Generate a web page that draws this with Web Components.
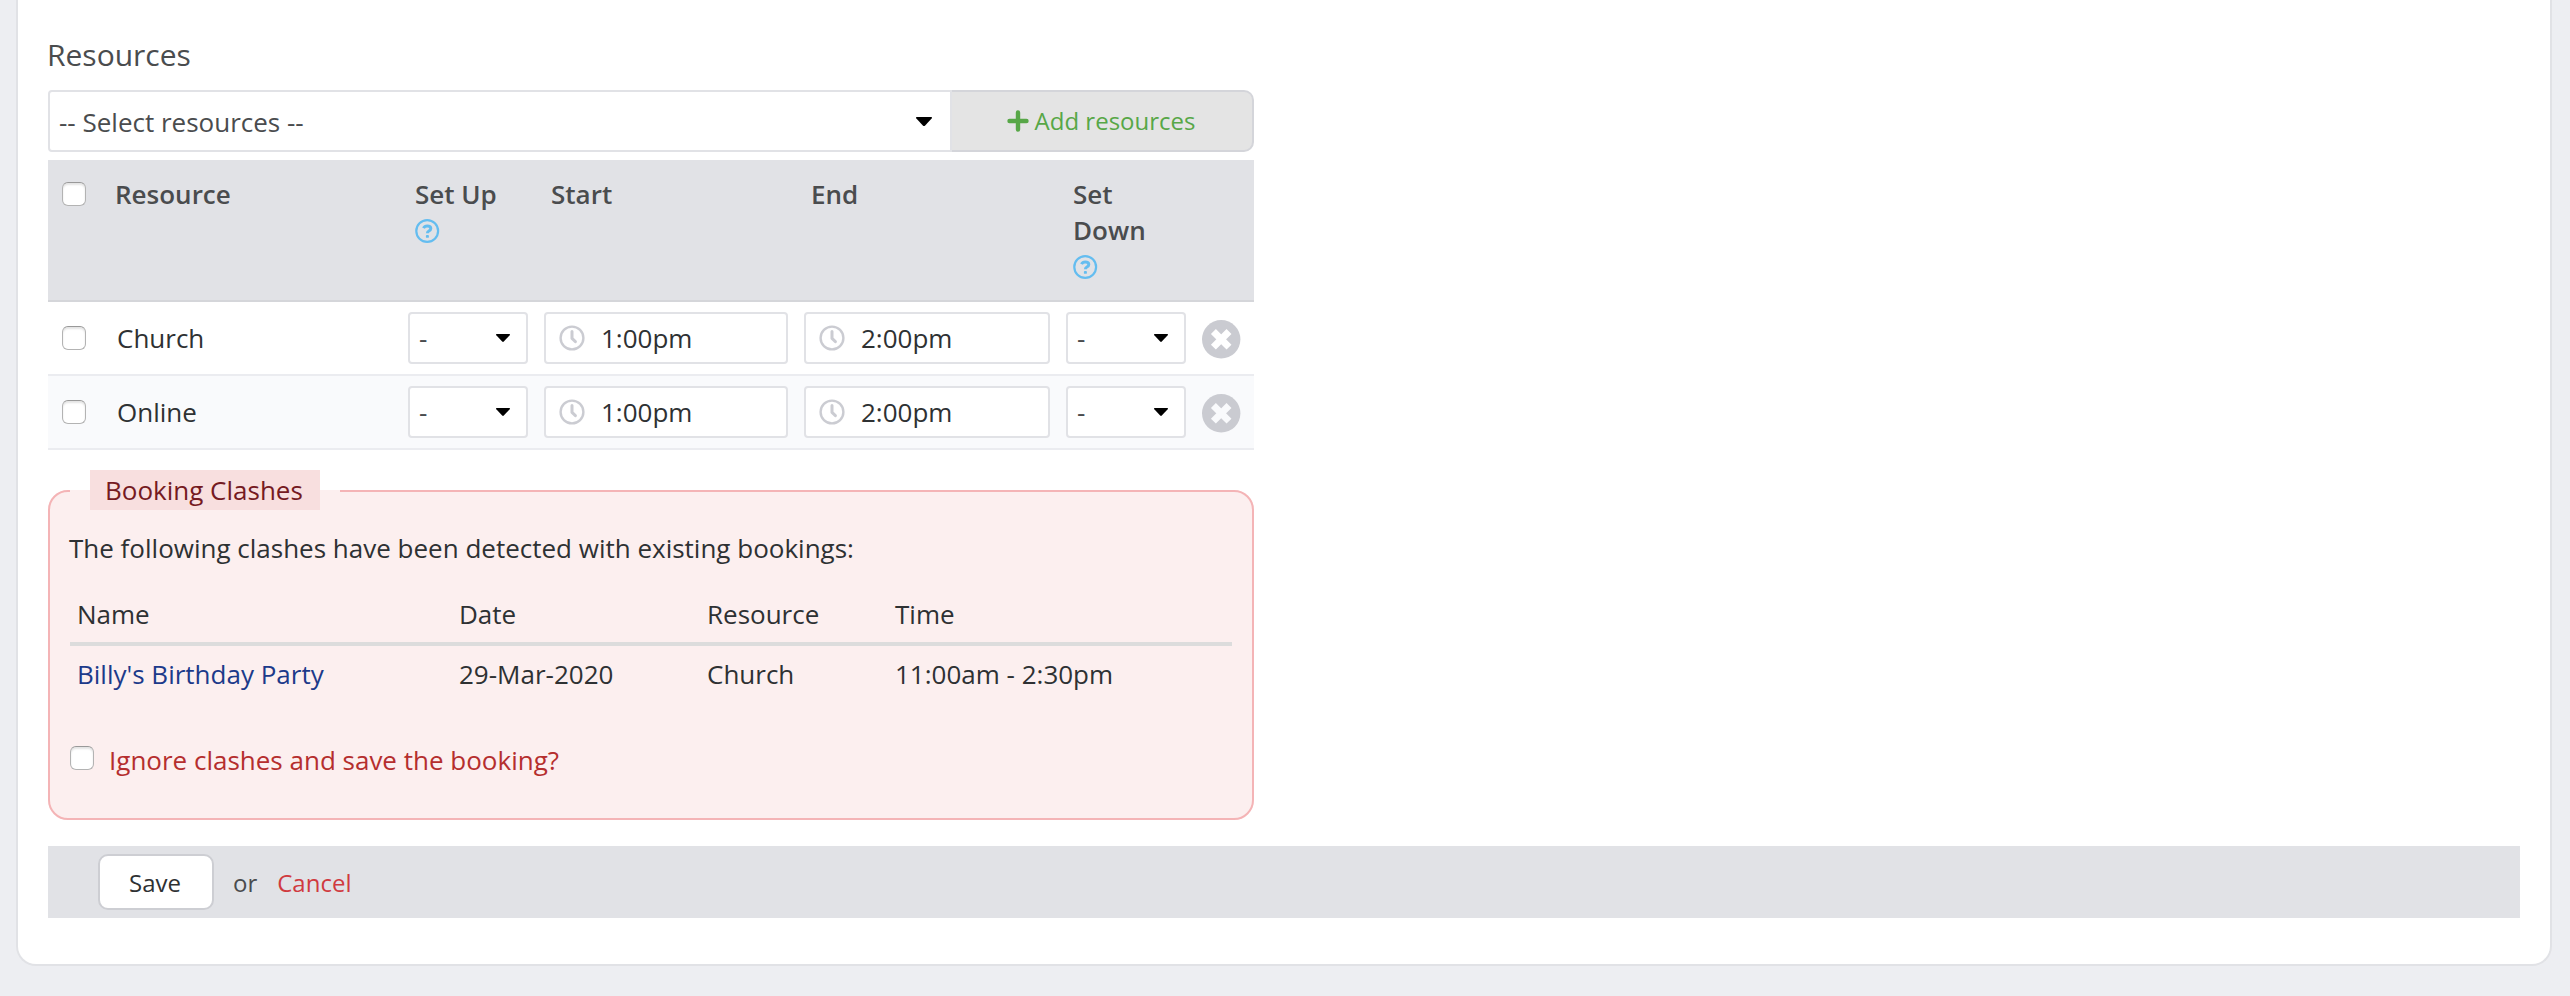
<!DOCTYPE html>
<html lang="en">
<head>
<meta charset="utf-8">
<title>Booking resources</title>
<style>
html, body { margin: 0; height: 100%; }
body { background: #edeef2; font: 26px/36px "Open Sans", sans-serif; color: #2e3133; overflow: hidden; }
</style>
</head>
<body>
<booking-page></booking-page>
<script>
const define = (name, html) => {
  const template = document.createElement('template');
  template.innerHTML = html;
  customElements.define(name, class extends HTMLElement {
    constructor() {
      super();
      this.attachShadow({ mode: 'open' }).append(template.content.cloneNode(true));
    }
  });
};

define('check-box', `<style>
:host { display: block; width: 24px; height: 24px; box-sizing: border-box; border: 1.5px solid #b3b3b3; border-top-color: #999; border-radius: 6px; background: #fff; box-shadow: inset 0 2px 2px #e4e4e4; flex: none; }
</style>`);

define('help-icon', `<style>
:host { display: flex; align-items: center; height: 36px; padding: 2px 0 0; box-sizing: border-box; }
svg { display: block; }
</style>
<svg width="25" height="24" viewBox="0 0 25 24" fill="none" stroke="#64bdf0">
<circle cx="12.2" cy="12" r="10.9" stroke-width="2.2"/>
<path d="M8.5 9.2Q9.6 6.9 12.2 6.9Q15.8 6.9 15.8 9.6Q15.8 11 13.9 12Q12.4 12.8 12.4 14.3" stroke-width="3"/>
<rect x="10.9" y="16" width="3" height="2.8" rx=".9" fill="#64bdf0" stroke="none"/>
</svg>`);

define('select-field', `<style>
:host { display: flex; align-items: center; justify-content: space-between; box-sizing: border-box; height: 52px; padding: 0 16px 0 9px; border: 2px solid #e1e2e6; border-radius: 4px; background: #fff; color: #4a4c4e; }
svg { display: block; width: var(--arrow, 14px); height: auto; }
</style>
<slot></slot><svg viewBox="0 0 14 8"><path d="M.6 0H13.4Q14.4 .5 13.7 1.3L7.8 7.6Q7 8.2 6.2 7.6L.3 1.3Q-.4 .5 .6 0Z"/></svg>`);

define('time-field', `<style>
:host { display: flex; align-items: center; box-sizing: border-box; height: 52px; padding-left: 13px; gap: 16px; border: 2px solid #e1e2e6; border-radius: 4px; background: #fff; }
svg { display: block; }
</style>
<svg width="26" height="26" viewBox="0 0 26 26" fill="none" stroke="#cbccd2"><circle cx="13" cy="13" r="11.4" stroke-width="2.4"/><path d="M13 6.6V13.4L16.4 16.6" stroke-width="3" stroke-linecap="round" stroke-linejoin="round"/></svg><slot></slot>`);

define('remove-button', `<style>
:host { display: block; width: 39px; height: 39px; margin-top: 2px; }
svg { display: block; }
</style>
<svg width="39" height="39" viewBox="0 0 39 39"><circle cx="19.2" cy="19.3" r="19.2" fill="#cacbd1"/><path d="M11.4 11.5L27 27.1M27 11.5L11.4 27.1" stroke="var(--row-bg, #fff)" stroke-width="7"/></svg>`);

define('resource-picker', `<style>
:host { display: flex; height: 62px; }
select-field { --arrow: 16px; width: 904px; height: 62px; padding: 1px 18px 0 9px; border-radius: 4px 0 0 4px; }
button { flex: 1; display: flex; align-items: center; justify-content: center; gap: 6px; margin: 0; padding: 0 2px 0 0; border: 2px solid #d4d5da; border-left: 0; border-radius: 0 10px 10px 0; background: #e4e4e4; color: #57a747; font: 24px/34px "Open Sans", sans-serif; }
</style>
<select-field>-- Select resources --</select-field>
<button><svg width="22" height="22" viewBox="0 0 22 22" stroke="#57a747" stroke-width="4.4" stroke-linecap="round"><path d="M11 2.5V19.5M2.5 11H19.5"/></svg><span>Add resources</span></button>`);

const columns = 'display: grid; grid-template-columns: 360px 136px 260px 262px 136px 52px;';

define('resource-head', `<style>
:host { ${columns} height: 142px; box-sizing: border-box; padding-top: 16px; background: #e1e2e6; border-bottom: 2px solid #d5d6da; color: #4a4c4e; font-weight: 600; }
.name { display: flex; gap: 29px; padding-left: 14px; align-items: center; height: 36px; }
.cell { padding-left: 7px; }
</style>
<div class="name"><check-box></check-box><span>Resource</span></div>
<div class="cell">Set Up<help-icon></help-icon></div>
<div class="cell">Start</div>
<div class="cell">End</div>
<div class="cell">Set<br>Down<help-icon></help-icon></div>`);

define('resource-row', `<style>
:host { ${columns} align-items: center; height: 74px; box-sizing: border-box; border-bottom: 2px solid #ebecf0; background: var(--row-bg, #fff); }
.name { display: flex; gap: 31px; padding-left: 14px; align-items: center; }
select-field { width: 120px; }
.start { width: 244px; }
.end { width: 246px; }
</style>
<div class="name"><check-box></check-box><slot></slot></div>
<select-field>-</select-field>
<time-field class="start">1:00pm</time-field>
<time-field class="end">2:00pm</time-field>
<select-field>-</select-field>
<remove-button></remove-button>`);

define('clash-panel', `<style>
:host { display: block; }
fieldset { box-sizing: border-box; height: 350px; min-width: 0; margin: 0; padding: 0 20px; border: 2px solid #f4b4b6; border-radius: 20px; background: #fcefef; }
legend { height: 42px; margin: 0; padding: 0 20px; }
legend span { display: block; height: 40px; line-height: 40px; padding: 0 17px 0 15px; background: #f8dfdf; color: #751a22; }
p { margin: 18px 0 30px -1px; }
.grid { display: grid; grid-template-columns: 382px 248px 188px 1fr; padding-left: 7px; }
.head { height: 46px; border-bottom: 4px solid #dcdcdc; }
.body { padding-top: 10px; }
a { color: #1c3a8a; }
.ignore { display: flex; gap: 15px; margin-top: 50px; color: #b52e2e; }
.ignore check-box { margin-top: 4px; }
</style>
<fieldset>
<legend><span>Booking Clashes</span></legend>
<p>The following clashes have been detected with existing bookings:</p>
<div class="grid head"><span>Name</span><span>Date</span><span>Resource</span><span>Time</span></div>
<div class="grid body"><a>Billy's Birthday Party</a><span>29-Mar-2020</span><span>Church</span><span>11:00am - 2:30pm</span></div>
<div class="ignore"><check-box></check-box><span>Ignore clashes and save the booking?</span></div>
</fieldset>`);

define('action-bar', `<style>
:host { display: flex; align-items: center; height: 72px; box-sizing: border-box; padding-left: 50px; background: #e1e2e6; font-size: 24px; color: #4a4c4e; }
button { box-sizing: border-box; width: 116px; height: 56px; margin: 0 19px 0 0; padding: 2px 2px 0 0; border: 2px solid #cdced3; border-radius: 10px; background: #fff; color: #2e3133; font: inherit; }
span, a { padding-top: 2px; }
a { margin-left: 20px; color: #d03a3f; }
</style>
<button>Save</button><span>or</span><a>Cancel</a>`);

define('booking-page', `<style>
:host { display: block; padding: 0 18px 0 16px; }
main { box-sizing: border-box; height: 966px; padding: 37px 30px 0; border: 2px solid #e1e2e6; border-top: 0; border-radius: 0 0 20px 20px; background: #fff; }
h2 { margin: 0 0 17px -1px; font-size: 30px; line-height: 36px; font-weight: 400; color: #4a4c4e; }
.column { width: 1206px; }
resource-head { margin-top: 8px; }
.alt { --row-bg: #f9fafc; }
clash-panel { margin-top: 20px; }
action-bar { margin-top: 26px; }
</style>
<main>
<div class="column">
<h2>Resources</h2>
<resource-picker></resource-picker>
<resource-head></resource-head>
<resource-row>Church</resource-row>
<resource-row class="alt">Online</resource-row>
<clash-panel></clash-panel>
</div>
<action-bar></action-bar>
</main>`);
</script>
</body>
</html>
